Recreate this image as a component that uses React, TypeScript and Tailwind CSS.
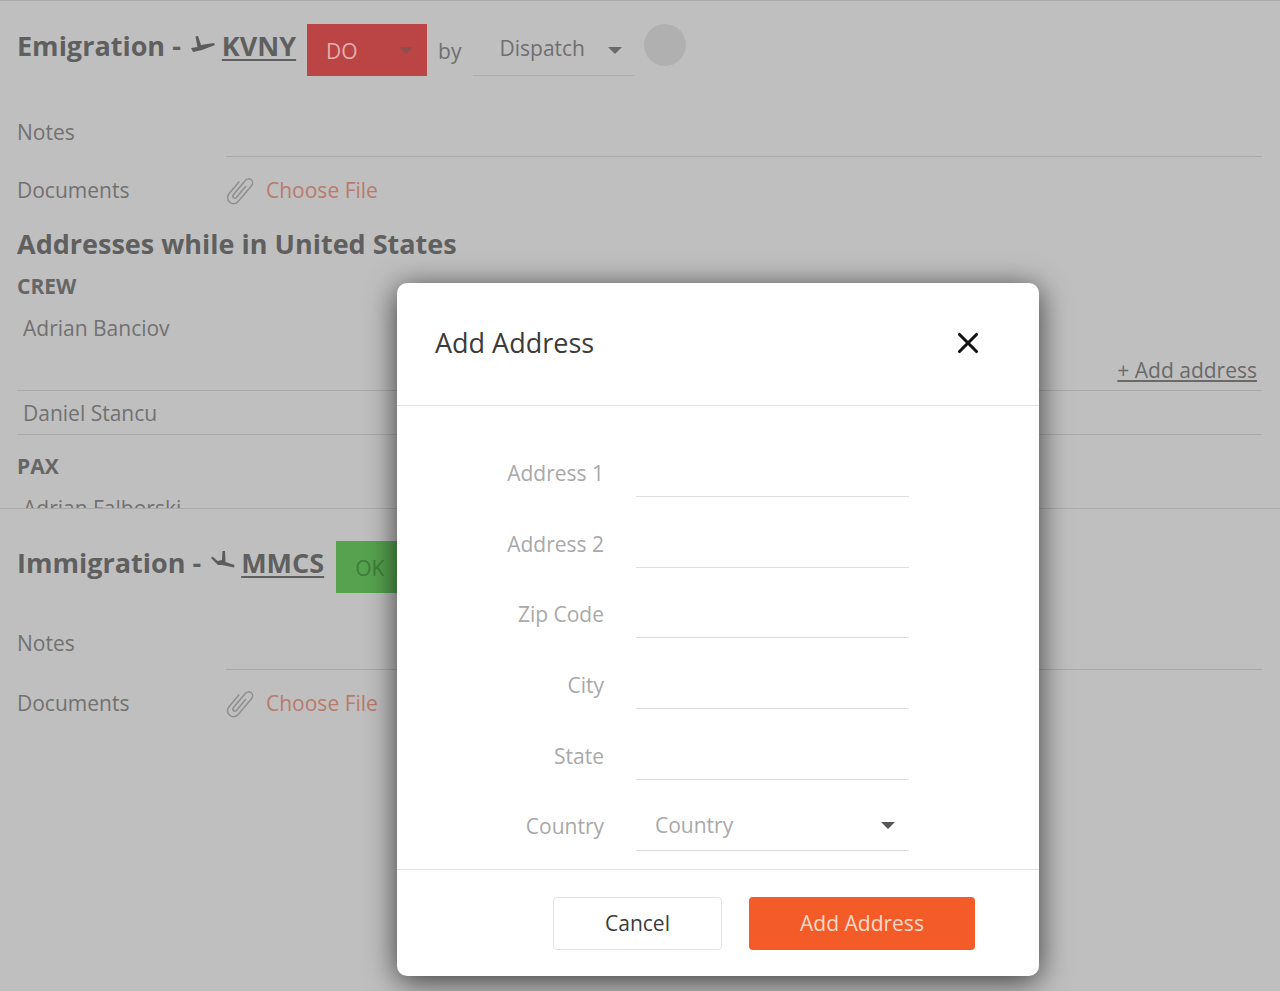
import React from 'react';
import { X } from 'lucide-react';

function Caret({ className }: { className: string }) {
  return <span className={`block w-0 h-0 border-x-[7px] border-x-transparent border-t-[7px] ${className}`} />;
}

function PlaneUp() {
  return (
    <svg width="26" height="22" viewBox="0 0 26 22" className="text-[#5c5c5c] -mt-[4px]" fill="currentColor">
      <path d="M2 15l2 4 9-2 13-5-1-2-13 2-3-9-2.500.500 2 10.500z" />
    </svg>
  );
}

function PlaneDown() {
  return (
    <svg width="26" height="24" viewBox="0 0 26 24" className="text-[#5c5c5c] -mt-[4px]" fill="currentColor">
      <path d="M2 9l1.500-1.500 5 4.500 4.500-1 .500-9 2.500 0 .500 11 9 3-.500 2.500-12-2.500-4 0z" />
    </svg>
  );
}

function PaperclipIcon() {
  return (
    <svg width="32" height="36" viewBox="-16 -18 32 36" className="text-[#8f8f8f] shrink-0" fill="none" stroke="currentColor" strokeWidth="1.500">
      <path transform="rotate(40)" d="M2 -7V8a2 2 0 0 1-4 0V-11a4 4 0 0 1 8 0V10a6 6 0 0 1-12 0V-6" />
    </svg>
  );
}

function DocumentsRow() {
  return (
    <div className="flex items-center h-[34px]">
      <span className="w-[207px] text-[#717171]">Documents</span>
      <PaperclipIcon />
      <span className="ml-[10px] text-[#b87a6b]">Choose File</span>
    </div>
  );
}

function NotesRow({ heightClass, labelClass }: { heightClass: string; labelClass: string }) {
  return (
    <div className={`flex ${heightClass}`}>
      <span className={`w-[209px] text-[#717171] ${labelClass}`}>Notes</span>
      <div className="flex-1 border-b border-[#a9a9a9]" />
    </div>
  );
}

function Field({ label }: { label: string }) {
  return (
    <div className="flex h-[70.8px] items-end">
      <span className="w-[207px] pb-[10px] text-right text-[#a9a9a9]">{label}</span>
      <div className="ml-[32px] w-[273px] border-b border-[#dedede]" />
    </div>
  );
}

export default function App() {
  return (
    <div className="relative w-[1280px] h-[991px] overflow-hidden bg-[#bfbfbf] text-[21px] leading-[28px] font-['Open_Sans',sans-serif]">
      {/* Emigration */}
      <section className="h-[509px] overflow-hidden border-t border-b border-[#aaaaaa] pl-[17px] pr-[18px] pt-[23px]">
        <div className="flex h-[52px]">
          <h2 className="flex items-center gap-[8px] h-[44px] text-[27px] font-bold text-[#5f5f5f]">
            <span>Emigration -</span>
            <PlaneUp />
            <span className="-ml-[1px] underline decoration-2 underline-offset-[3px]">KVNY</span>
          </h2>
          <div className="ml-[11px] flex w-[120px] items-center justify-between bg-[#bb4444] pl-[19px] pr-[14px] pt-[1px] text-[#e3aeae]">
            DO
            <Caret className="border-t-[#8f4f4f]" />
          </div>
          <span className="ml-[11px] self-center pt-[1px] text-[#6f6f6f]">by</span>
          <div className="ml-[12px] flex w-[161px] items-center justify-between border-b border-[#adadad] pl-[26px] pr-[12px] pb-[4px] text-[#6f6f6f]">
            Dispatch
            <Caret className="border-t-[#6b6b6b] mt-[6px]" />
          </div>
          <div className="ml-[10px] h-[42px] w-[42px] rounded-full bg-[#b0b0b0]" />
        </div>
        <div className="mt-[32px]">
          <NotesRow heightClass="h-[49px]" labelClass="pt-[10px]" />
        </div>
        <div className="mt-[16px]">
          <DocumentsRow />
        </div>
        <h3 className="mt-[19px] text-[27px] leading-[36px] font-bold text-[#5f5f5f]">Addresses while in United States</h3>
        <div className="mt-[10px] font-bold text-[#666666]">CREW</div>
        <div className="border-b border-[#aaaaaa] h-[91px] relative">
          <div className="pl-[6px] pt-[14px] text-[#717171]">Adrian Banciov</div>
          <span className="absolute right-[5px] bottom-[6px] underline text-[#6a6a6a]">+ Add address</span>
        </div>
        <div className="border-b border-[#aaaaaa] h-[44px] pl-[6px] pt-[8px] text-[#717171]">Daniel Stancu</div>
        <div className="mt-[17px] font-bold text-[#666666]">PAX</div>
        <div className="pl-[6px] pt-[14px] text-[#717171]">Adrian Falborski</div>
      </section>

      {/* Immigration */}
      <section className="pl-[17px] pr-[18px] pt-[32px]">
        <div className="flex h-[52px]">
          <h2 className="flex items-center gap-[8px] h-[44px] text-[27px] font-bold text-[#5f5f5f]">
            <span>Immigration -</span>
            <PlaneDown />
            <span className="-ml-[2px] underline decoration-2 underline-offset-[3px]">MMCS</span>
          </h2>
          <div className="ml-[12px] flex w-[120px] items-center bg-[#56a24e] pl-[19px] pt-[1px] text-[#3f7d3a]">OK</div>
        </div>
        <div className="mt-[25px]">
          <NotesRow heightClass="h-[52px]" labelClass="pt-[11px]" />
        </div>
        <div className="mt-[16px]">
          <DocumentsRow />
        </div>
      </section>

      {/* Add Address modal */}
      <div className="absolute left-[397px] top-[283px] flex h-[693px] w-[642px] flex-col rounded-[10px] bg-white shadow-[0_5px_30px_rgba(0,0,0,0.7)]">
        <div className="flex h-[123px] items-center justify-between border-b border-[#e3e3e3] pl-[38px] pr-[54px] pb-[2px]">
          <span className="text-[27px] text-[#3b3b3b]">Add Address</span>
          <X size={34} strokeWidth={2.2} className="text-[#111111]" />
        </div>
        <div className="pt-[20px]">
          <Field label="Address 1" />
          <Field label="Address 2" />
          <Field label="Zip Code" />
          <Field label="City" />
          <Field label="State" />
          <div className="flex h-[70.8px] items-end">
            <span className="w-[207px] pb-[11px] text-right text-[#a9a9a9]">Country</span>
            <div className="ml-[32px] flex w-[273px] items-center justify-between border-b border-[#dedede] pb-[11px] pl-[19px] pr-[14px] text-[#a9a9a9]">
              Country
              <Caret className="border-t-[#555555] mt-[2px]" />
            </div>
          </div>
        </div>
        <div className="mt-[18px] flex flex-1 items-start justify-end gap-[27px] border-t border-[#e3e3e3] pt-[27px] pr-[64px]">
          <button className="h-[53px] w-[169px] rounded-[4px] border border-[#e3e3e3] bg-white text-[#3b3b3b]">Cancel</button>
          <button className="h-[53px] w-[226px] rounded-[4px] bg-[#f35c28] text-[#fbd9c8]">Add Address</button>
        </div>
      </div>
    </div>
  );
}
